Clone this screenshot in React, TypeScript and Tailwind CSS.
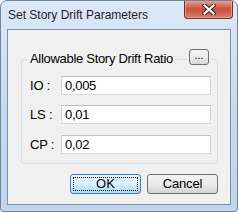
import React from "react";

function CloseGlyph() {
  return (
    <svg width="14" height="11" viewBox="0 0 14 11">
      <path d="M2.5 1.5 L11.5 9.5 M11.5 1.5 L2.5 9.5" stroke="#3a2420" strokeWidth="4.2" strokeLinecap="square" fill="none" />
      <path d="M2.5 1.5 L11.5 9.5 M11.5 1.5 L2.5 9.5" stroke="#ffffff" strokeWidth="2.2" strokeLinecap="square" fill="none" />
    </svg>
  );
}

function Row({ label, value }: { label: string; value: string }) {
  return (
    <div className="flex items-center h-[19px]">
      <span className="w-[39px] pl-[8px] text-[13px] tracking-[-0.2px] text-black leading-none">{label}</span>
      <div className="w-[150px] h-[19px] bg-white border border-[#d5d9de] border-t-[#bcc2ca] flex items-center pl-[3px] text-[13px] tracking-[-0.3px] text-black leading-none">
        {value}
      </div>
    </div>
  );
}

export default function App() {
  return (
    <div
      className="w-[238px] h-[212px] flex flex-col rounded-t-[7px] rounded-b-[3px] border border-[#73849a] bg-gradient-to-b from-[#dce9f7] via-[#c6dbf0] to-[#bfd5ee] overflow-hidden"
      style={{ fontFamily: '"Liberation Sans", Arial, sans-serif' }}
    >
      {/* title bar */}
      <div className="h-[28px] flex items-start justify-between">
        <div className="pl-[7px] pt-[6px] text-[12px] leading-[16px] text-[#1e1e2e]">Set Story Drift Parameters</div>
        <div className="mr-[4px] -mt-px w-[49px] h-[19px] rounded-b-[4px] border border-[#6e2c22] border-t-0 bg-gradient-to-b from-[#e8a899] via-[#c9503d] to-[#d97a68] flex items-center justify-center shadow-[inset_0_0_0_1px_rgba(255,200,190,0.5)]">
          <CloseGlyph />
        </div>
      </div>
      {/* client area */}
      <div className="mx-[6px] mb-[6px] h-[177px] border border-[#7d90a6] bg-[#f0f0f0] flex flex-col">
        <div className="ml-[13px] mt-[29px] w-[197px] h-[105px] border border-[#d5dfe5] rounded-[3px] flex flex-col">
          <div className="-mt-[11px] h-[16px] flex items-center pl-[6px] pr-[6px]">
            <span className="bg-[#f0f0f0] px-[2px] text-[13px] tracking-[-0.3px] leading-none text-black pt-[3px]">
              Allowable Story Drift Ratio
            </span>
            <div className="flex-1" />
            <div className="bg-[#f0f0f0] px-[2px] h-[16px]">
              <div className="w-[20px] h-[16px] rounded-[3px] border border-[#707070] bg-gradient-to-b from-[#f3f3f3] via-[#ebebeb] to-[#d6d6d6] flex items-end justify-center pb-[3px] text-[11px] leading-none text-black">
                ...
              </div>
            </div>
          </div>
          <div className="mt-[11px] flex flex-col gap-[10.5px]">
            <Row label="IO :" value="0,005" />
            <Row label="LS :" value="0,01" />
            <Row label="CP :" value="0,02" />
          </div>
        </div>
        <div className="mt-[10px] ml-[62px] flex gap-[6px]">
          <div className="w-[71px] h-[20px] rounded-[3px] border border-[#3c7fb1] bg-gradient-to-b from-[#eaf6fd] via-[#d9f0fc] to-[#a7d9f5] p-[2px]">
            <div className="w-full h-full border border-dotted border-black flex items-center justify-center text-[13px] leading-none text-black">
              OK
            </div>
          </div>
          <div className="w-[71px] h-[20px] rounded-[3px] border border-[#707070] bg-gradient-to-b from-[#f2f2f2] via-[#ebebeb] to-[#d3d3d3] flex items-center justify-center text-[13px] tracking-[-0.2px] leading-none text-black">
            Cancel
          </div>
        </div>
      </div>
    </div>
  );
}
